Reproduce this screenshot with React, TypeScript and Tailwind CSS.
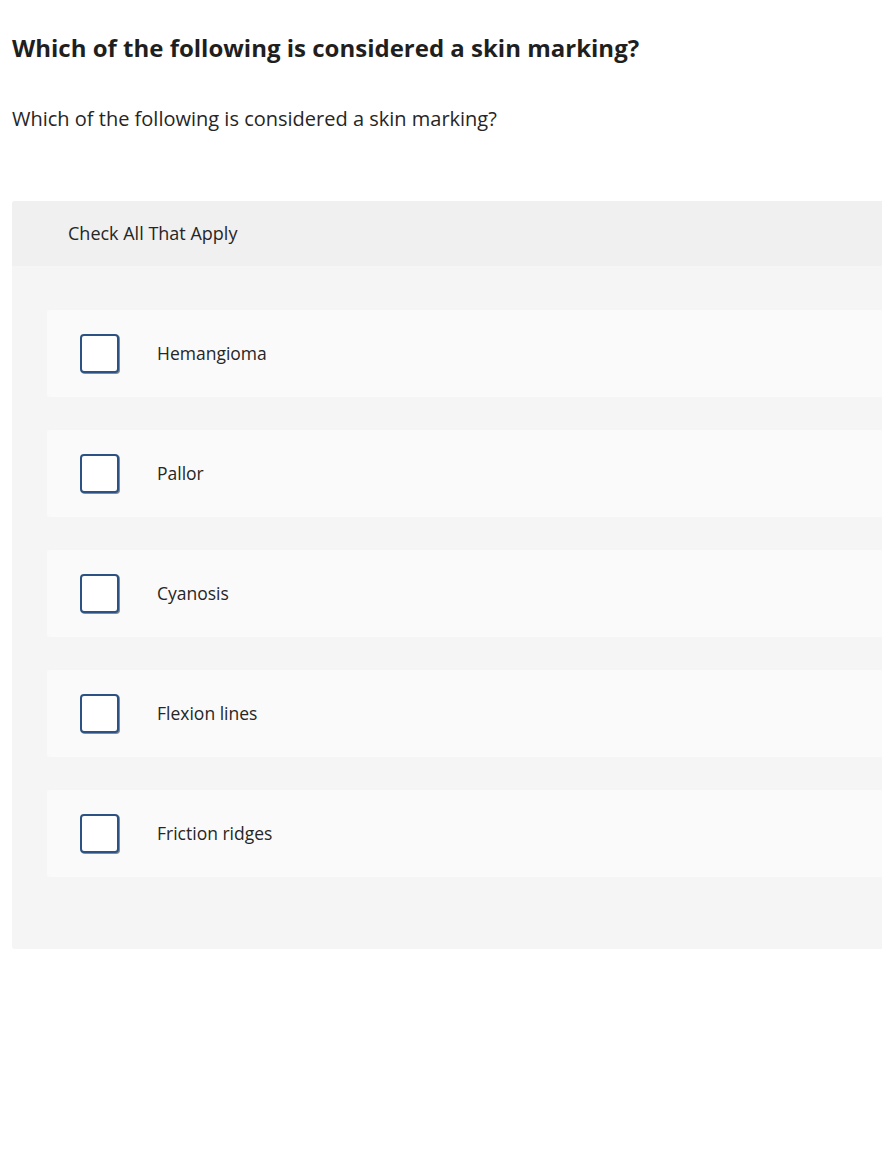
import React from 'react';

const options = ['Hemangioma', 'Pallor', 'Cyanosis', 'Flexion lines', 'Friction ridges'];

export default function App() {
  return (
    <div className="min-h-[1150px] bg-white text-[#222] font-['Open_Sans','Lato',sans-serif]">
      <div className="pt-[32px] pl-[12px]">
        <h1 className="text-[24px] font-bold leading-[32px] text-[#1f1f1f]">
          Which of the following is considered a skin marking?
        </h1>
        <p className="mt-[42px] text-[20px] leading-[26px] text-[#262626]">
          Which of the following is considered a skin marking?
        </p>
      </div>

      <section className="mt-[69px] ml-[12px] rounded-l-[3px] bg-[#f5f5f5] overflow-hidden">
        <div className="h-[65px] flex items-center pl-[56px] bg-[#f0f0f0] text-[18px] text-[#262626]">
          Check All That Apply
        </div>
        <div className="pt-[44px] pb-[72px] pl-[35px] flex flex-col gap-[33px]">
          {options.map((opt) => (
            <label
              key={opt}
              className="h-[87px] flex items-center rounded-l-[3px] bg-[#fafafa] cursor-pointer"
            >
              <span className="ml-[33px] w-[39px] h-[39px] rounded-[4px] border-2 border-[#2c5283] bg-white shadow-[1px_1px_0_#8a8a8a]" />
              <span className="ml-[38px] text-[17.5px] text-[#262626]">{opt}</span>
            </label>
          ))}
        </div>
      </section>
    </div>
  );
}
